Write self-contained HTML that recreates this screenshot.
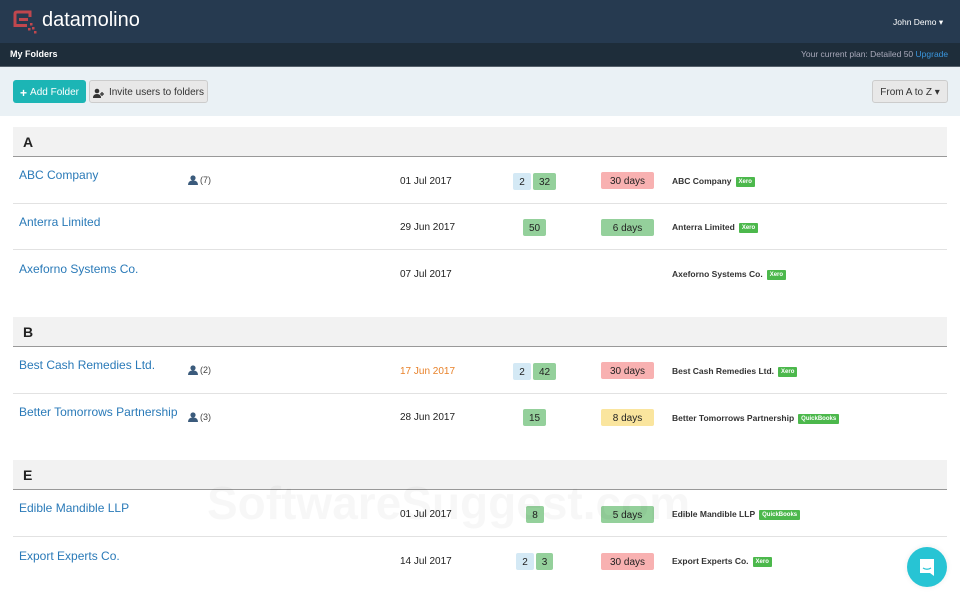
<!DOCTYPE html><html><head><meta charset="utf-8"><style>
*{margin:0;padding:0;box-sizing:border-box}
body{width:960px;height:600px;overflow:hidden;background:#fff;font-family:"Liberation Sans",Arial,sans-serif;position:relative;font-size:11px;color:#222}
.a{position:absolute}
.top{left:0;top:0;width:960px;height:43px;background:#263a50}
.sub{left:0;top:43px;width:960px;height:24px;background:#1e2d3a;border-bottom:1px solid #55606a}
.tool{left:0;top:67px;width:960px;height:49px;background:#eaf1f5}
.btn{height:23px;border-radius:3px;font-size:10px;display:flex;align-items:center;justify-content:center;padding-top:2px}
.hd{left:13px;width:934px;height:30px;background:#f2f2f2;border-bottom:1px solid #999;font-weight:bold;font-size:14px;padding:7px 0 0 10px}
.row{left:13px;width:934px;border-bottom:1px solid #e2e2e2}
.nm{color:#2a7ab8;font-size:12px}
.dt{font-size:10px}
.pill{height:17px;border-radius:2px;font-size:10px;display:flex;align-items:center;justify-content:center;padding-top:2px}
.bl{background:#d4e9f5}.gr{background:#94d09b}.rd{background:#f8b1b1}.yl{background:#fae59e}
.co{font-size:8.5px;font-weight:bold;color:#333}
.tag{display:inline-block;background:#4cb84c;color:#fff;font-size:6px;font-weight:bold;padding:2px 3px;border-radius:1px;margin-left:4px;vertical-align:1px}
.us{font-size:9px;color:#444;display:flex;align-items:center;gap:2px}
</style></head><body>
<div class="a top"></div>
<svg class="a" style="left:12px;top:9px" width="26" height="26" viewBox="0 0 26 26"><path d="M3 18V5q0-2 2-2h13v5" fill="none" stroke="#c0474e" stroke-width="3"/><rect x="7" y="9" width="9" height="3" fill="#c0474e"/><rect x="3" y="15" width="12" height="3" fill="#c0474e"/><rect x="18" y="14" width="2.5" height="2.5" fill="#c0474e"/><rect x="16" y="19" width="2.5" height="2.5" fill="#c0474e"/><rect x="20" y="18" width="2.5" height="2.5" fill="#c0474e"/><rect x="22" y="22" width="2.5" height="2.5" fill="#c0474e"/></svg>
<div class="a" style="left:42px;top:9px;color:#fff;font-size:20px">datamolino</div>
<div class="a" style="left:893px;top:17px;color:#fff;font-size:8.5px">John Demo ▾</div>
<div class="a sub"></div>
<div class="a" style="left:10px;top:49px;color:#fff;font-size:9px;font-weight:bold">My Folders</div>
<div class="a" style="left:801px;top:49px;color:#aab;font-size:8.5px">Your current plan: Detailed 50 <span style="color:#3a96dd">Upgrade</span></div>
<div class="a tool"></div>
<div class="a btn" style="left:13px;top:80px;width:73px;background:#1cb5b5;color:#fff"><b style="font-size:12px;margin-right:3px">+</b>Add Folder</div>
<div class="a btn" style="left:89px;top:80px;width:119px;background:#e8e8e8;border:1px solid #ccc;color:#333"><svg width="12" height="10" viewBox="0 0 12 10" style="margin-right:4px"><circle cx="4" cy="3" r="2.3" fill="#333"/><path d="M0 10q0-4 4-4t4 4z" fill="#333"/><path d="M9 4v4M7 6h4" stroke="#333" stroke-width="1.3"/></svg>Invite users to folders</div>
<div class="a btn" style="left:872px;top:80px;width:76px;background:#e8e8e8;border:1px solid #ccc;color:#333">From A to Z ▾</div>

<div class="a hd" style="top:127px">A</div>
<div class="a hd" style="top:317px">B</div>
<div class="a hd" style="top:460px">E</div>

<div class="a row" style="top:157px;height:47px"></div>
<div class="a row" style="top:204px;height:46px"></div>
<div class="a row" style="top:347px;height:47px"></div>
<div class="a row" style="top:490px;height:47px"></div>

<div class="a nm" style="left:19px;top:168px">ABC Company</div>
<div class="a us" style="left:188px;top:175px"><svg width="10" height="10" viewBox="0 0 10 10"><circle cx="5" cy="3" r="2.6" fill="#3b5b7c"/><path d="M0 10q0-4.5 5-4.5t5 4.5z" fill="#3b5b7c"/></svg>(7)</div>
<div class="a dt" style="left:400px;top:176px">01 Jul 2017</div>
<div class="a pill bl" style="left:513px;top:173px;width:18px">2</div>
<div class="a pill gr" style="left:533px;top:173px;width:23px">32</div>
<div class="a pill rd" style="left:601px;top:172px;width:53px">30 days</div>
<div class="a co" style="left:672px;top:176px">ABC Company<span class="tag">Xero</span></div>

<div class="a nm" style="left:19px;top:215px">Anterra Limited</div>
<div class="a dt" style="left:400px;top:222px">29 Jun 2017</div>
<div class="a pill gr" style="left:523px;top:219px;width:23px">50</div>
<div class="a pill gr" style="left:601px;top:219px;width:53px">6 days</div>
<div class="a co" style="left:672px;top:222px">Anterra Limited<span class="tag">Xero</span></div>

<div class="a nm" style="left:19px;top:262px">Axeforno Systems Co.</div>
<div class="a dt" style="left:400px;top:269px">07 Jul 2017</div>
<div class="a co" style="left:672px;top:269px">Axeforno Systems Co.<span class="tag">Xero</span></div>

<div class="a nm" style="left:19px;top:358px">Best Cash Remedies Ltd.</div>
<div class="a us" style="left:188px;top:365px"><svg width="10" height="10" viewBox="0 0 10 10"><circle cx="5" cy="3" r="2.6" fill="#3b5b7c"/><path d="M0 10q0-4.5 5-4.5t5 4.5z" fill="#3b5b7c"/></svg>(2)</div>
<div class="a dt" style="left:400px;top:366px;color:#e8822a">17 Jun 2017</div>
<div class="a pill bl" style="left:513px;top:363px;width:18px">2</div>
<div class="a pill gr" style="left:533px;top:363px;width:23px">42</div>
<div class="a pill rd" style="left:601px;top:362px;width:53px">30 days</div>
<div class="a co" style="left:672px;top:366px">Best Cash Remedies Ltd.<span class="tag">Xero</span></div>

<div class="a nm" style="left:19px;top:405px">Better Tomorrows Partnership</div>
<div class="a us" style="left:188px;top:412px"><svg width="10" height="10" viewBox="0 0 10 10"><circle cx="5" cy="3" r="2.6" fill="#3b5b7c"/><path d="M0 10q0-4.5 5-4.5t5 4.5z" fill="#3b5b7c"/></svg>(3)</div>
<div class="a dt" style="left:400px;top:412px">28 Jun 2017</div>
<div class="a pill gr" style="left:523px;top:409px;width:23px">15</div>
<div class="a pill yl" style="left:601px;top:409px;width:53px">8 days</div>
<div class="a co" style="left:672px;top:413px">Better Tomorrows Partnership<span class="tag">QuickBooks</span></div>

<div class="a nm" style="left:19px;top:501px">Edible Mandible LLP</div>
<div class="a dt" style="left:400px;top:509px">01 Jul 2017</div>
<div class="a pill gr" style="left:526px;top:506px;width:18px">8</div>
<div class="a pill gr" style="left:601px;top:506px;width:53px">5 days</div>
<div class="a co" style="left:672px;top:509px">Edible Mandible LLP<span class="tag">QuickBooks</span></div>

<div class="a nm" style="left:19px;top:549px">Export Experts Co.</div>
<div class="a dt" style="left:400px;top:556px">14 Jul 2017</div>
<div class="a pill bl" style="left:516px;top:553px;width:18px">2</div>
<div class="a pill gr" style="left:536px;top:553px;width:17px">3</div>
<div class="a pill rd" style="left:601px;top:553px;width:53px">30 days</div>
<div class="a co" style="left:672px;top:556px">Export Experts Co.<span class="tag">Xero</span></div>

<div class="a" style="left:207px;top:476px;font-size:46px;font-weight:bold;color:rgba(0,0,0,0.03)">SoftwareSuggest.com</div>
<div class="a" style="left:907px;top:547px;width:40px;height:40px;border-radius:50%;background:#27c4d4;box-shadow:0 0 6px rgba(0,0,0,0.08)"></div>
<svg class="a" style="left:917px;top:557px" width="20" height="21" viewBox="0 0 20 21"><path d="M3 2h14v17l-4-3H3z" fill="#fff"/><path d="M6 11q4 2.5 8 0" stroke="#27c4d4" stroke-width="1.3" fill="none"/></svg>
</body></html>
